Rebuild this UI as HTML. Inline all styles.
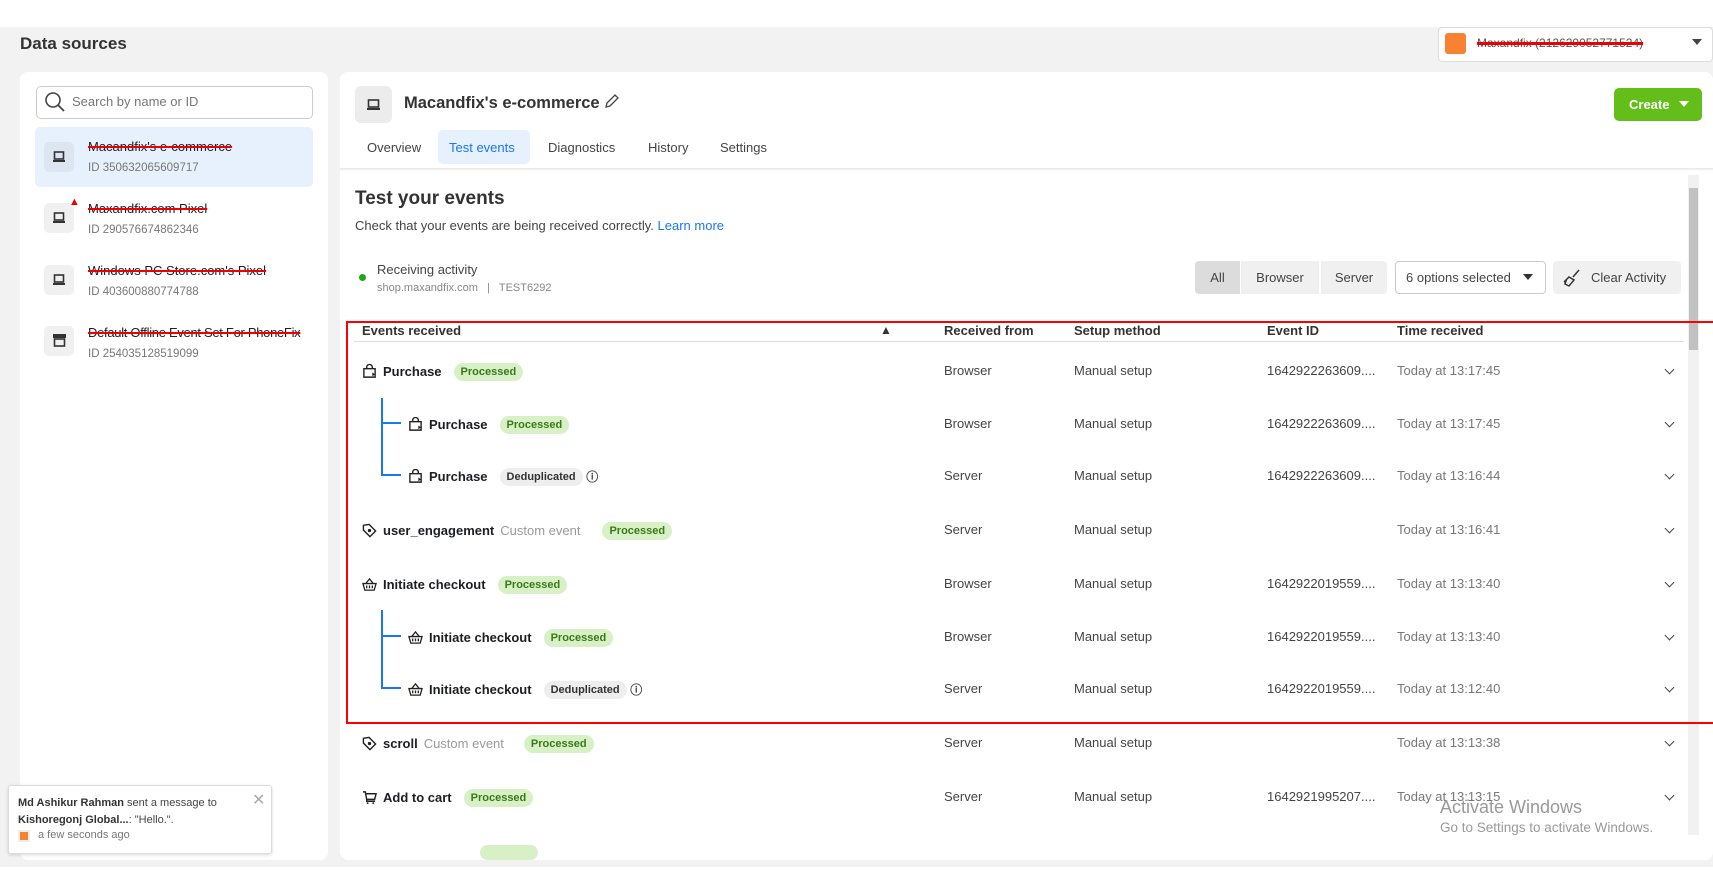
<!DOCTYPE html>
<html><head><meta charset="utf-8"><style>
*{box-sizing:border-box;margin:0;padding:0}
body{width:1713px;height:884px;overflow:hidden;background:#fff;font-family:"Liberation Sans",Arial,sans-serif;color:#1c1e21;position:relative}
.a{position:absolute}
.gray{left:0;top:27px;width:1713px;height:840px;background:#f2f2f2}
.panel{background:#fff;border-radius:8px}
.ib{width:30px;height:30px;background:#f0f0f0;border-radius:5px}
.nm{font-size:13px;color:#1c1e21;text-decoration:line-through;text-decoration-color:#e00;text-decoration-thickness:2px}
.id{font-size:11.5px;color:#777}
.tab{font-size:13px;color:#444;top:140px}
.btn{top:261px;height:33px;background:#f0f0f0;font-size:13px;color:#444;text-align:center;line-height:33px}
.hd{top:323px;font-size:13px;font-weight:bold;color:#333}
.row{font-size:13px;color:#444}
.ev{font-weight:bold;color:#1c1e21;font-size:13px}
.ev svg{vertical-align:-3px;margin-right:6px}
.bp{display:inline-block;background:#d7f0c5;color:#3a7a1a;font-size:11px;font-weight:bold;padding:3px 7px;border-radius:10px;margin-left:12px;vertical-align:1px}
.bd{display:inline-block;background:#eee;color:#333;font-size:11px;font-weight:bold;padding:3px 7px;border-radius:10px;margin-left:12px;vertical-align:1px}
.ce{color:#999;font-weight:normal;margin-left:6px}
.chev{width:7px;height:7px;border-right:1.6px solid #444;border-bottom:1.6px solid #444;transform:rotate(45deg)}
</style></head><body>
<svg width="0" height="0" style="position:absolute"><defs>
<symbol id="bag" viewBox="0 0 16 16"><path d="M5 5V3.5a3 3 0 0 1 6 0V5M2 5h12v9H2z" fill="none" stroke="#222" stroke-width="1.5"/><path d="M11 9l3 2-3 2" fill="#222"/></symbol>
<symbol id="tag" viewBox="0 0 16 16"><path d="M1.5 2.5l6-1 7 7-6 6-7-7z" fill="none" stroke="#222" stroke-width="1.5"/><circle cx="8" cy="8" r="1.8" fill="#222"/></symbol>
<symbol id="bask" viewBox="0 0 16 16"><path d="M1 7h14l-2 7H3zM4 7l4-5 4 5M5 9v3M8 9v3M11 9v3" fill="none" stroke="#222" stroke-width="1.4"/></symbol>
<symbol id="cart" viewBox="0 0 16 16"><path d="M1 2h2.5l1.5 8h8.5l1.5-6H4.2M5 10v2h9" fill="none" stroke="#222" stroke-width="1.5"/><circle cx="6" cy="14" r="1" fill="#222"/><circle cx="12" cy="14" r="1" fill="#222"/></symbol>
</defs></svg>
<div class="a gray"></div>
<div class="a" style="left:20px;top:34px;font-size:17px;font-weight:bold;color:#333">Data sources</div>
<div class="a" style="left:1438px;top:27px;width:275px;height:35px;background:#fff;border:1px solid #ddd;border-radius:4px"></div>
<div class="a" style="left:1445px;top:33px;width:21px;height:21px;background:#f98232;border-radius:3px"></div>
<div class="a" style="left:1477px;top:36px;font-size:12px;color:#555;text-decoration:line-through;text-decoration-color:#e00;text-decoration-thickness:3px">Maxandfix (212629052771524)</div>
<div class="a" style="left:1692px;top:39px;border:5px solid transparent;border-top:6px solid #444"></div>

<div class="a panel" style="left:20px;top:72px;width:308px;height:788px"></div>
<div class="a" style="left:36px;top:86px;width:277px;height:33px;border:1px solid #ccc;border-radius:5px"></div>
<svg class="a" style="left:44px;top:91px" width="22" height="22" viewBox="0 0 22 22"><circle cx="9" cy="9" r="7" fill="none" stroke="#444" stroke-width="1.6"/><path d="M14 14l6 6" stroke="#444" stroke-width="1.8"/></svg>
<div class="a" style="left:72px;top:94px;font-size:13px;color:#777">Search by name or ID</div>
<div class="a" style="left:35px;top:127px;width:278px;height:60px;background:#e7f1fd;border-radius:5px"></div>
<div class="a ib" style="left:44px;top:142px;background:#dde6f0"></div>
<div class="a ib" style="left:44px;top:203px"></div>
<div class="a ib" style="left:44px;top:265px"></div>
<div class="a ib" style="left:44px;top:326px"></div>
<svg class="a" style="left:53px;top:151px" width="12" height="12"><rect x="1.5" y="1" width="9" height="7" fill="none" stroke="#333" stroke-width="1.6"/><rect x="0" y="9" width="12" height="2" fill="#333"/></svg>
<svg class="a" style="left:53px;top:212px" width="12" height="12"><rect x="1.5" y="1" width="9" height="7" fill="none" stroke="#333" stroke-width="1.6"/><rect x="0" y="9" width="12" height="2" fill="#333"/></svg>
<svg class="a" style="left:53px;top:274px" width="12" height="12"><rect x="1.5" y="1" width="9" height="7" fill="none" stroke="#333" stroke-width="1.6"/><rect x="0" y="9" width="12" height="2" fill="#333"/></svg>
<svg class="a" style="left:53px;top:334px" width="13" height="13"><rect x="0" y="0" width="13" height="4" fill="#333"/><rect x="1.5" y="5" width="10" height="7" fill="none" stroke="#333" stroke-width="1.6"/></svg>
<div class="a nm" style="left:88px;top:139px">Macandfix's e-commerce</div>
<div class="a id" style="left:88px;top:162px">ID 350632065609717</div>
<div class="a" style="left:69px;top:196px;color:#e00;font-size:11px;font-weight:bold">▲</div>
<div class="a nm" style="left:88px;top:201px">Maxandfix.com Pixel</div>
<div class="a id" style="left:88px;top:224px">ID 290576674862346</div>
<div class="a nm" style="left:88px;top:263px">Windows PC Store.com's Pixel</div>
<div class="a id" style="left:88px;top:286px">ID 403600880774788</div>
<div class="a nm" style="left:88px;top:325px;letter-spacing:-0.3px">Default Offline Event Set For PhoneFix</div>
<div class="a id" style="left:88px;top:348px">ID 254035128519099</div>

<div class="a panel" style="left:340px;top:72px;width:1373px;height:788px"></div>
<div class="a" style="left:340px;top:168px;width:1373px;height:3px;background:linear-gradient(#e4e4e4,#fff)"></div>
<div class="a" style="left:355px;top:86px;width:37px;height:37px;background:#ececec;border-radius:6px"></div>
<svg class="a" style="left:367px;top:99px" width="13" height="12"><rect x="1.5" y="1" width="10" height="7" fill="none" stroke="#333" stroke-width="1.6"/><rect x="0" y="9" width="13" height="2" fill="#333"/></svg>
<div class="a" style="left:404px;top:94px;font-size:16.5px;font-weight:bold;color:#333">Macandfix's e-commerce</div>
<svg class="a" style="left:604px;top:93px" width="16" height="16"><path d="M2 14l1-4 8-8 3 3-8 8z" fill="none" stroke="#444" stroke-width="1.3"/></svg>
<div class="a" style="left:438px;top:130px;width:92px;height:34px;background:#e7f1fd;border-radius:5px"></div>
<div class="a tab" style="left:367px">Overview</div>
<div class="a tab" style="left:449px;color:#1877f2">Test events</div>
<div class="a tab" style="left:548px">Diagnostics</div>
<div class="a tab" style="left:648px">History</div>
<div class="a tab" style="left:720px">Settings</div>
<div class="a" style="left:1614px;top:88px;width:88px;height:33px;background:#63be1a;border-radius:5px;color:#fff;font-size:13px;font-weight:bold;line-height:33px;padding-left:15px">Create</div>
<div class="a" style="left:1679px;top:101px;border:5px solid transparent;border-top:6px solid #fff"></div>

<div class="a" style="left:355px;top:188px;font-size:19px;font-weight:bold;color:#333">Test your events</div>
<div class="a" style="left:355px;top:218px;font-size:13px;color:#444">Check that your events are being received correctly. <span style="color:#1877f2">Learn more</span></div>
<div class="a" style="left:359px;top:274px;width:7px;height:7px;border-radius:50%;background:#1aa81a"></div>
<div class="a" style="left:377px;top:262px;font-size:13px;color:#444">Receiving activity</div>
<div class="a" style="left:377px;top:282px;font-size:11px;color:#888">shop.maxandfix.com &nbsp; | &nbsp; TEST6292</div>
<div class="a btn" style="left:1195px;width:45px;background:#dcdcdc;border-radius:4px 0 0 4px">All</div>
<div class="a btn" style="left:1241px;width:78px">Browser</div>
<div class="a btn" style="left:1321px;width:66px;border-radius:0 4px 4px 0">Server</div>
<div class="a btn" style="left:1395px;width:151px;background:#fff;border:1px solid #ccc;border-radius:4px;line-height:31px;text-align:left;padding-left:10px">6 options selected</div>
<div class="a" style="left:1523px;top:274px;border:5px solid transparent;border-top:6px solid #333"></div>
<div class="a btn" style="left:1553px;width:128px;border-radius:4px;text-align:left;padding-left:38px">Clear Activity</div>
<svg class="a" style="left:1562px;top:268px" width="20" height="20"><path d="M17 2l-6 7M7 9l5 3-5 6-4-2 1-3-2 1z" fill="none" stroke="#333" stroke-width="1.5"/></svg>

<div class="a" style="left:1688px;top:175px;width:11px;height:660px;background:#f1f1f1"></div>
<div class="a" style="left:1689px;top:188px;width:9px;height:162px;background:#c1c1c1"></div>

<div class="a hd" style="left:362px">Events received</div>
<div class="a hd" style="left:880px;font-size:12px">▲</div>
<div class="a hd" style="left:944px">Received from</div>
<div class="a hd" style="left:1074px">Setup method</div>
<div class="a hd" style="left:1267px">Event ID</div>
<div class="a hd" style="left:1397px">Time received</div>
<div class="a" style="left:354px;top:341px;width:1330px;height:1px;background:#ddd"></div>

<div class="a" style="left:381px;top:398px;width:2px;height:77px;background:#1877f2"></div>
<div class="a" style="left:381px;top:422px;width:20px;height:2px;background:#1877f2"></div>
<div class="a" style="left:381px;top:474px;width:20px;height:2px;background:#1877f2"></div>
<div class="a" style="left:381px;top:610px;width:2px;height:78px;background:#1877f2"></div>
<div class="a" style="left:381px;top:635px;width:20px;height:2px;background:#1877f2"></div>
<div class="a" style="left:381px;top:687px;width:20px;height:2px;background:#1877f2"></div>

<div class="a" style="left:346px;top:321px;width:1367px;height:403px;border:2px solid #f00;border-right:none"></div>

<div class="a row" style="left:362px;top:363px"><span class="ev"><svg width="15" height="15"><use href="#bag"/></svg>Purchase</span><span class="bp">Processed</span></div>
<div class="a row" style="left:408px;top:416px"><span class="ev"><svg width="15" height="15"><use href="#bag"/></svg>Purchase</span><span class="bp">Processed</span></div>
<div class="a row" style="left:408px;top:468px"><span class="ev"><svg width="15" height="15"><use href="#bag"/></svg>Purchase</span><span class="bd">Deduplicated</span> <b style="font-size:12px">ⓘ</b></div>
<div class="a row" style="left:362px;top:522px"><span class="ev"><svg width="15" height="15"><use href="#tag"/></svg>user_engagement</span><span class="ce">Custom event</span><span class="bp" style="margin-left:22px">Processed</span></div>
<div class="a row" style="left:362px;top:576px"><span class="ev"><svg width="15" height="15"><use href="#bask"/></svg>Initiate checkout</span><span class="bp">Processed</span></div>
<div class="a row" style="left:408px;top:629px"><span class="ev"><svg width="15" height="15"><use href="#bask"/></svg>Initiate checkout</span><span class="bp">Processed</span></div>
<div class="a row" style="left:408px;top:681px"><span class="ev"><svg width="15" height="15"><use href="#bask"/></svg>Initiate checkout</span><span class="bd">Deduplicated</span> <b style="font-size:12px">ⓘ</b></div>
<div class="a row" style="left:362px;top:735px"><span class="ev"><svg width="15" height="15"><use href="#tag"/></svg>scroll</span><span class="ce">Custom event</span><span class="bp" style="margin-left:20px">Processed</span></div>
<div class="a row" style="left:362px;top:789px"><span class="ev"><svg width="15" height="15"><use href="#cart"/></svg>Add to cart</span><span class="bp">Processed</span></div>
<div class="a" style="left:480px;top:845px;width:58px;height:15px;background:#d7f0c5;border-radius:8px"></div>

<div class="a row" style="left:944px;top:363px">Browser</div><div class="a row" style="left:1074px;top:363px">Manual setup</div><div class="a row" style="left:1267px;top:363px">1642922263609....</div><div class="a row" style="left:1397px;top:363px;color:#777">Today at 13:17:45</div>
<div class="a row" style="left:944px;top:416px">Browser</div><div class="a row" style="left:1074px;top:416px">Manual setup</div><div class="a row" style="left:1267px;top:416px">1642922263609....</div><div class="a row" style="left:1397px;top:416px;color:#777">Today at 13:17:45</div>
<div class="a row" style="left:944px;top:468px">Server</div><div class="a row" style="left:1074px;top:468px">Manual setup</div><div class="a row" style="left:1267px;top:468px">1642922263609....</div><div class="a row" style="left:1397px;top:468px;color:#777">Today at 13:16:44</div>
<div class="a row" style="left:944px;top:522px">Server</div><div class="a row" style="left:1074px;top:522px">Manual setup</div><div class="a row" style="left:1397px;top:522px;color:#777">Today at 13:16:41</div>
<div class="a row" style="left:944px;top:576px">Browser</div><div class="a row" style="left:1074px;top:576px">Manual setup</div><div class="a row" style="left:1267px;top:576px">1642922019559....</div><div class="a row" style="left:1397px;top:576px;color:#777">Today at 13:13:40</div>
<div class="a row" style="left:944px;top:629px">Browser</div><div class="a row" style="left:1074px;top:629px">Manual setup</div><div class="a row" style="left:1267px;top:629px">1642922019559....</div><div class="a row" style="left:1397px;top:629px;color:#777">Today at 13:13:40</div>
<div class="a row" style="left:944px;top:681px">Server</div><div class="a row" style="left:1074px;top:681px">Manual setup</div><div class="a row" style="left:1267px;top:681px">1642922019559....</div><div class="a row" style="left:1397px;top:681px;color:#777">Today at 13:12:40</div>
<div class="a row" style="left:944px;top:735px">Server</div><div class="a row" style="left:1074px;top:735px">Manual setup</div><div class="a row" style="left:1397px;top:735px;color:#777">Today at 13:13:38</div>
<div class="a row" style="left:944px;top:789px">Server</div><div class="a row" style="left:1074px;top:789px">Manual setup</div><div class="a row" style="left:1267px;top:789px">1642921995207....</div><div class="a row" style="left:1397px;top:789px;color:#777">Today at 13:13:15</div>

<div class="a chev" style="left:1666px;top:366px"></div>
<div class="a chev" style="left:1666px;top:419px"></div>
<div class="a chev" style="left:1666px;top:471px"></div>
<div class="a chev" style="left:1666px;top:525px"></div>
<div class="a chev" style="left:1666px;top:579px"></div>
<div class="a chev" style="left:1666px;top:632px"></div>
<div class="a chev" style="left:1666px;top:684px"></div>
<div class="a chev" style="left:1666px;top:738px"></div>
<div class="a chev" style="left:1666px;top:792px"></div>

<div class="a" style="left:1440px;top:797px;font-size:18px;color:#999">Activate Windows</div>
<div class="a" style="left:1440px;top:820px;font-size:13.5px;color:#999">Go to Settings to activate Windows.</div>

<div class="a" style="left:8px;top:785px;width:264px;height:69px;background:#fff;border:1px solid #ddd;border-radius:3px;box-shadow:0 1px 3px rgba(0,0,0,.15)"></div>
<div class="a" style="left:18px;top:795px;font-size:11px;color:#444;line-height:17px">
<b style="color:#333">Md Ashikur Rahman</b> sent a message to<br><b style="color:#333">Kishoregonj Global...</b>: "Hello.".</div>
<div class="a" style="left:252px;top:790px;font-size:16px;color:#aaa">✕</div>
<div class="a" style="left:18px;top:830px;width:12px;height:12px;background:#f98232;border:2px solid #eee"></div>
<div class="a" style="left:38px;top:829px;font-size:11px;color:#777">a few seconds ago</div>
</body></html>
